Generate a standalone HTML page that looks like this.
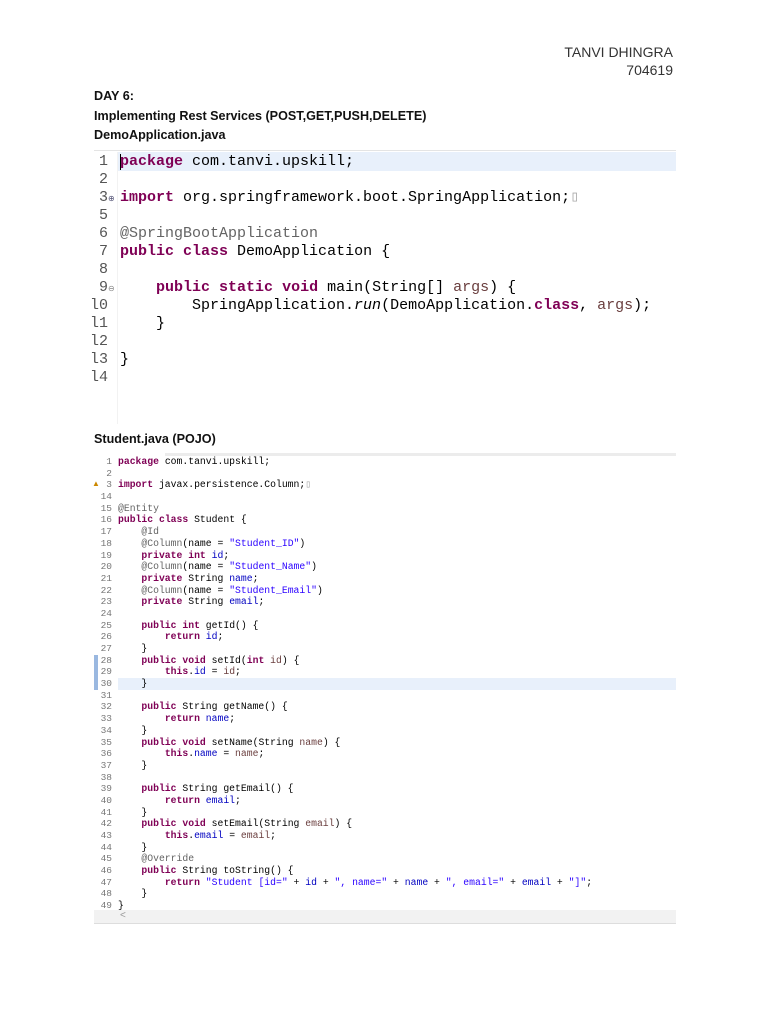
<!DOCTYPE html>
<html><head><meta charset="utf-8"><style>
*{margin:0;padding:0;box-sizing:border-box}
body{width:768px;height:1024px;background:#fff;position:relative;overflow:hidden;font-family:"Liberation Sans",sans-serif;color:#111}
.abs{position:absolute;white-space:pre}
.h{font-weight:bold;font-size:12.6px;left:94px}
.k{color:#7f0055;font-weight:bold}
.a{color:#646464}
.s{color:#2a00ff}
.f{color:#0000c0}
.v{color:#6a3e3e}
.c1{font-family:"Liberation Mono",monospace;font-size:15px;line-height:18px;color:#000}
.n1{font-family:"Liberation Mono",monospace;font-size:15px;line-height:18px;color:#555;text-align:right;width:20px}
.c2{font-family:"Liberation Mono",monospace;font-size:9.75px;line-height:11.68px;color:#000}
.n2{font-family:"Liberation Mono",monospace;font-size:9.5px;line-height:11.68px;color:#777}
</style></head><body>
<div class="abs" style="right:95px;top:43px;font-size:14px;color:#333;text-align:right;line-height:18px">TANVI DHINGRA<br>704619</div>
<div class="abs h" style="top:89px">DAY 6:</div>
<div class="abs h" style="top:109px">Implementing Rest Services (POST,GET,PUSH,DELETE)</div>
<div class="abs h" style="top:128px">DemoApplication.java</div>

<div class="abs" style="left:94px;top:150px;width:582px;height:1px;background:#e4e4e4"></div>
<div class="abs" style="left:118px;top:152px;width:558px;height:19px;background:#e8f0fb"></div>
<div class="abs" style="left:117px;top:152px;width:1px;height:272px;background:#f2f2f2"></div>
<div class="abs" style="left:120px;top:154px;width:1px;height:16px;background:#000"></div>
<div class="abs n1" style="left:88px;top:153px">1
2
3
5
6
7
8
9
l0
l1
l2
l3
l4</div>
<div class="abs" style="left:108px;top:194px;font-size:8px;color:#557">⊕</div>
<div class="abs" style="left:108px;top:284px;font-size:8px;color:#888">⊖</div>
<div class="abs c1" style="left:120px;top:153px"><span class="k">package</span> com.tanvi.upskill;

<span class="k">import</span> org.springframework.boot.SpringApplication;<span style="color:#aaa">▯</span>

<span class="a">@SpringBootApplication</span>
<span class="k">public</span> <span class="k">class</span> DemoApplication {

    <span class="k">public</span> <span class="k">static</span> <span class="k">void</span> main(String[] <span class="v">args</span>) {
        SpringApplication.<i>run</i>(DemoApplication.<span class="k">class</span>, <span class="v">args</span>);
    }

}
</div>

<div class="abs h" style="top:432px">Student.java (POJO)</div>

<div class="abs" style="left:165px;top:453px;width:511px;height:3px;background:#ececec"></div>
<div class="abs" style="left:118px;top:678px;width:558px;height:12px;background:#e8f0fb"></div>
<div class="abs" style="left:94px;top:655px;width:4px;height:35px;background:#9ab8e0"></div>
<div class="abs n2" style="left:96px;top:456px;text-align:right;width:16px"> 1
 2
 3
14
15
16
17
18
19
20
21
22
23
24
25
26
27
28
29
30
31
32
33
34
35
36
37
38
39
40
41
42
43
44
45
46
47
48
49</div>
<div class="abs" style="left:92px;top:479px;font-size:8px;color:#c80">▲</div>
<div class="abs c2" style="left:118px;top:456px"><span class="k">package</span> com.tanvi.upskill;

<span class="k">import</span> javax.persistence.Column;<span style="color:#aaa">▯</span>

<span class="a">@Entity</span>
<span class="k">public</span> <span class="k">class</span> Student {
    <span class="a">@Id</span>
    <span class="a">@Column</span>(name = <span class="s">"Student_ID"</span>)
    <span class="k">private</span> <span class="k">int</span> <span class="f">id</span>;
    <span class="a">@Column</span>(name = <span class="s">"Student_Name"</span>)
    <span class="k">private</span> String <span class="f">name</span>;
    <span class="a">@Column</span>(name = <span class="s">"Student_Email"</span>)
    <span class="k">private</span> String <span class="f">email</span>;

    <span class="k">public</span> <span class="k">int</span> getId() {
        <span class="k">return</span> <span class="f">id</span>;
    }
    <span class="k">public</span> <span class="k">void</span> setId(<span class="k">int</span> <span class="v">id</span>) {
        <span class="k">this</span>.<span class="f">id</span> = <span class="v">id</span>;
    }

    <span class="k">public</span> String getName() {
        <span class="k">return</span> <span class="f">name</span>;
    }
    <span class="k">public</span> <span class="k">void</span> setName(String <span class="v">name</span>) {
        <span class="k">this</span>.<span class="f">name</span> = <span class="v">name</span>;
    }

    <span class="k">public</span> String getEmail() {
        <span class="k">return</span> <span class="f">email</span>;
    }
    <span class="k">public</span> <span class="k">void</span> setEmail(String <span class="v">email</span>) {
        <span class="k">this</span>.<span class="f">email</span> = <span class="v">email</span>;
    }
    <span class="a">@Override</span>
    <span class="k">public</span> String toString() {
        <span class="k">return</span> <span class="s">"Student [id="</span> + <span class="f">id</span> + <span class="s">", name="</span> + <span class="f">name</span> + <span class="s">", email="</span> + <span class="f">email</span> + <span class="s">"]"</span>;
    }
}</div>
<div class="abs" style="left:94px;top:910px;width:582px;height:14px;background:#f2f2f2;border-bottom:1px solid #ddd"></div>
<div class="abs" style="left:120px;top:910px;font-size:10px;color:#999">&lt;</div>
</body></html>
